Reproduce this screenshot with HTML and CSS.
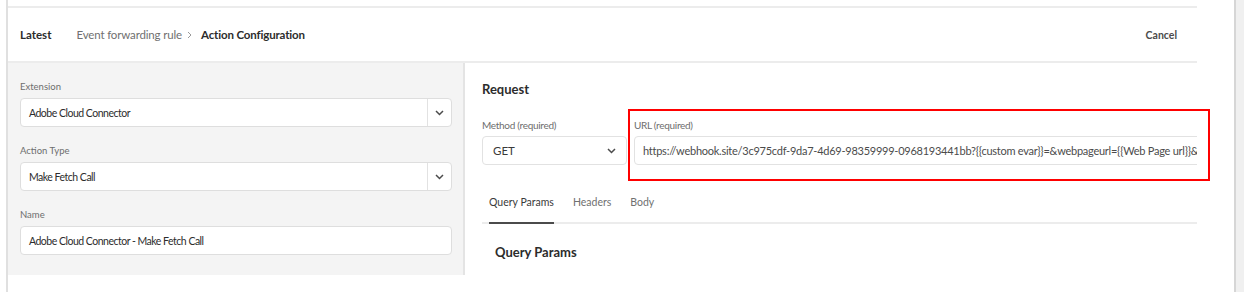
FILE: index.html
```html
<!DOCTYPE html>
<html lang="en">
<head>
    <meta charset="UTF-8">
    <meta name="viewport" content="width=device-width, initial-scale=1.0">
    <title>Action Configuration</title>
    <link rel="stylesheet" href="styles.css">
</head>
<body>
    <div class="frame">
        <div class="app">
            <header class="topbar">
                <span class="crumb-root">Latest</span>
                <nav class="crumbs">
                    <span class="crumb">Event forwarding rule</span>
                    <svg class="crumb-sep" width="5" height="8" viewBox="0 0 5 8"><path d="M1 1l3 3-3 3"/></svg>
                    <span class="crumb current">Action Configuration</span>
                </nav>
                <button class="cancel-btn">Cancel</button>
            </header>

            <div class="workspace">
                <aside class="side">
                    <div class="field">
                        <label class="side-label">Extension</label>
                        <div class="picker">
                            <span class="picker-value">Adobe Cloud Connector</span>
                            <span class="picker-btn"><svg width="9" height="6" viewBox="0 0 9 6"><path d="M1 1l3.5 3.5L8 1"/></svg></span>
                        </div>
                    </div>
                    <div class="field">
                        <label class="side-label">Action Type</label>
                        <div class="picker">
                            <span class="picker-value">Make Fetch Call</span>
                            <span class="picker-btn"><svg width="9" height="6" viewBox="0 0 9 6"><path d="M1 1l3.5 3.5L8 1"/></svg></span>
                        </div>
                    </div>
                    <div class="field">
                        <label class="side-label">Name</label>
                        <div class="text-input">Adobe Cloud Connector - Make Fetch Call</div>
                    </div>
                </aside>

                <main class="request">
                    <h2 class="request-title">Request</h2>
                    <div class="request-row">
                        <div class="method-field">
                            <label class="req-label">Method (required)</label>
                            <div class="method-picker">
                                <span>GET</span>
                                <svg width="9" height="6" viewBox="0 0 9 6"><path d="M1 1l3.5 3.5L8 1"/></svg>
                            </div>
                        </div>
                        <div class="url-field">
                            <label class="req-label">URL (required)</label>
                            <div class="url-input">https://webhook.site/3c975cdf-9da7-4d69-98359999-0968193441bb?{{custom evar}}=&amp;webpageurl={{Web Page url}}&amp;</div>
                        </div>
                    </div>

                    <div class="tabs">
                        <span class="tab active">Query Params</span>
                        <span class="tab">Headers</span>
                        <span class="tab">Body</span>
                    </div>

                    <h3 class="section-title">Query Params</h3>
                </main>

                <!-- red annotation box around the URL -->
                <div class="highlight"></div>
            </div>
        </div>
    </div>
    <div class="scrollbar"></div>
</body>
</html>
```

FILE: styles.css
```css
* {
    box-sizing: border-box;
}

body {
    margin: 0;
    height: 100vh;
    display: flex;
    background: #fff;
    font-family: Lato, "Liberation Sans", sans-serif;
    color: #2c2c2c;
    overflow: hidden;
}

.frame {
    flex: 1;
    min-width: 0;
    margin-left: 6px;
    padding: 6px 37px 0 0;
    border-left: 2px solid #e0e0e0;
}

.scrollbar {
    width: 10px;
    flex-shrink: 0;
    border-left: 2px solid #d6d6d6;
    background: #f0f0f0;
}

.app {
    border-top: 2px solid #ececec;
}

/* header */
.topbar {
    height: 55px;
    display: flex;
    align-items: center;
    padding: 0 20px 0 12px;
    border-bottom: 2px solid #ececec;
}

.crumb-root {
    font-weight: bold;
    font-size: 11.5px;
}

.crumbs {
    display: flex;
    align-items: center;
    margin-left: 25px;
}

.crumb {
    font-size: 11.5px;
    letter-spacing: -0.15px;
    color: #707070;
}

.crumb.current {
    font-weight: bold;
    color: #2c2c2c;
}

.crumb-sep {
    margin: 0 9px 0 5px;
    fill: none;
    stroke: #9a9a9a;
    stroke-width: 1;
}

.cancel-btn {
    margin-left: auto;
    border: none;
    background: none;
    padding: 0;
    font-family: inherit;
    font-size: 10.5px;
    font-weight: bold;
    color: #4b4b4b;
}

/* body */
.workspace {
    position: relative;
    display: flex;
    height: 212px;
}

.side {
    width: 457px;
    flex-shrink: 0;
    background: #f4f4f4;
    border-right: 2px solid #e4e4e4;
    padding: 17px 11px 0 12px;
}

.field {
    margin-bottom: 17px;
}

.side-label {
    display: block;
    font-size: 9.5px;
    line-height: 14px;
    color: #6e6e6e;
    margin-bottom: 4px;
}

.picker,
.text-input {
    height: 29px;
    background: #fff;
    border: 1px solid #dedede;
    border-radius: 4px;
    display: flex;
    align-items: center;
    font-size: 10.5px;
    letter-spacing: -0.5px;
}

.picker-value {
    flex: 1;
    padding-left: 8px;
}

.picker-btn {
    width: 24px;
    height: 100%;
    border-left: 1px solid #e2e2e2;
    display: flex;
    align-items: center;
    justify-content: center;
}

.picker-btn svg,
.method-picker svg {
    fill: none;
    stroke: #4b4b4b;
    stroke-width: 1.5;
}

.text-input {
    padding-left: 8px;
}

.request {
    flex: 1;
    min-width: 0;
    overflow: hidden;
    padding: 16px 0 0 17px;
}

.request-title {
    margin: 0;
    font-size: 13px;
    line-height: 20px;
    font-weight: bold;
}

.request-row {
    display: flex;
    gap: 7px;
    margin-top: 19px;
}

.req-label {
    display: block;
    font-size: 10px;
    letter-spacing: -0.3px;
    line-height: 14px;
    color: #6e6e6e;
    margin-bottom: 4px;
}

.method-field {
    width: 145px;
    flex-shrink: 0;
}

.method-picker {
    height: 29px;
    border: 1px solid #e2e2e2;
    border-radius: 4px;
    display: flex;
    align-items: center;
    justify-content: space-between;
    padding: 0 10px;
    font-size: 11.5px;
    color: #3a3a3a;
}

.url-field {
    flex: 1;
    min-width: 0;
    margin-right: -14px;
}

.url-input {
    height: 29px;
    border: 1px solid #e2e2e2;
    border-radius: 4px;
    padding-left: 8px;
    display: flex;
    align-items: center;
    white-space: nowrap;
    overflow: hidden;
    font-size: 11px;
    letter-spacing: -0.25px;
    color: #4b4b4b;
}

.tabs {
    display: flex;
    gap: 19px;
    margin-top: 17px;
    padding-left: 7px;
    border-bottom: 2px solid #ececec;
}

.tab {
    padding: 10px 0;
    line-height: 20px;
    font-size: 10.5px;
    color: #707070;
    border-bottom: 2px solid transparent;
    margin-bottom: -2px;
}

.tab.active {
    color: #3a3a3a;
    border-bottom-color: #4b4b4b;
}

.section-title {
    margin: 18px 0 0 13px;
    font-size: 13px;
    line-height: 20px;
    font-weight: bold;
    color: #2c2c2c;
}

.highlight {
    position: absolute;
    left: 620px;
    top: 46px;
    width: 582px;
    height: 72px;
    border: 2px solid #f00;
    pointer-events: none;
}
```
